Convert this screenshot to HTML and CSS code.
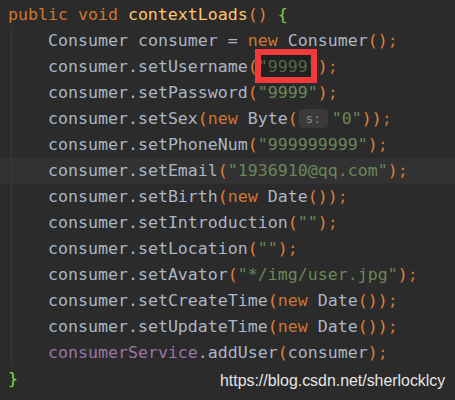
FILE: index.html
```html
<!DOCTYPE html>
<html>
<head>
<meta charset="utf-8">
<link rel="stylesheet" href="styles.css">
</head>
<body>
<div class="editor">
  <div class="guide"></div>
  <div class="code">
    <div class="line"><span class="kw">public void </span><span class="fn">contextLoads</span><span class="p">()</span> <span class="br">{</span></div>
    <div class="line in">Consumer consumer = <span class="kw">new </span>Consumer<span class="p">()</span><span class="kw">;</span></div>
    <div class="line in">consumer.setUsername<span class="p">(</span><span class="str">"9999"</span><span class="p">)</span><span class="kw">;</span></div>
    <div class="line in">consumer.setPassword<span class="p">(</span><span class="str">"9999"</span><span class="p">)</span><span class="kw">;</span></div>
    <div class="line in">consumer.setSex<span class="p">(</span><span class="kw">new </span>Byte<span class="p">(</span><span class="hint">s:</span><span class="str">"0"</span><span class="p">))</span><span class="kw">;</span></div>
    <div class="line in">consumer.setPhoneNum<span class="p">(</span><span class="str">"999999999"</span><span class="p">)</span><span class="kw">;</span></div>
    <div class="line in caret">consumer.setEmail<span class="p">(</span><span class="str">"1936910@qq.com"</span><span class="p">)</span><span class="kw">;</span></div>
    <div class="line in">consumer.setBirth<span class="p">(</span><span class="kw">new </span>Date<span class="p">())</span><span class="kw">;</span></div>
    <div class="line in">consumer.setIntroduction<span class="p">(</span><span class="str">""</span><span class="p">)</span><span class="kw">;</span></div>
    <div class="line in">consumer.setLocation<span class="p">(</span><span class="str">""</span><span class="p">)</span><span class="kw">;</span></div>
    <div class="line in">consumer.setAvator<span class="p">(</span><span class="str">"*/img/user.jpg"</span><span class="p">)</span><span class="kw">;</span></div>
    <div class="line in">consumer.setCreateTime<span class="p">(</span><span class="kw">new </span>Date<span class="p">())</span><span class="kw">;</span></div>
    <div class="line in">consumer.setUpdateTime<span class="p">(</span><span class="kw">new </span>Date<span class="p">())</span><span class="kw">;</span></div>
    <div class="line in"><span class="fld">consumerService</span>.addUser<span class="p">(</span>consumer<span class="p">)</span><span class="kw">;</span></div>
    <div class="line"><span class="br2">}</span></div>
  </div>
  <div class="mark"></div>
  <div class="watermark">https://blog.csdn.net/sherlocklcy</div>
</div>
</body>
</html>
```

FILE: styles.css
```css
html, body {
  margin: 0;
  padding: 0;
  background: #2b2b2b;
}
.editor {
  position: relative;
  width: 455px;
  height: 400px;
  background: #2b2b2b;
  overflow: hidden;
}
.code {
  padding-top: 2px;
  font-family: "DejaVu Sans Mono", "Liberation Mono", monospace;
  font-size: 16.6px;
  color: #a9b7c6;
}
.line {
  height: 26px;
  line-height: 26px;
  padding-left: 8px;
  white-space: pre;
}
.line.in {
  padding-left: 48px;
}
.caret {
  background: #323232;
}
.kw { color: #cc7832; }
.fn { color: #ffc66d; }
.p { color: #e0803c; }
.str { color: #6a8759; }
.fld { color: #9876aa; }
.br { color: #8fc14a; }
.br2 { color: #7ee03a; }
.hint {
  display: inline-block;
  width: 29px;
  height: 19px;
  line-height: 19px;
  margin: 0 4px 0 1px;
  border-radius: 4px;
  background: #3a3a3a;
  color: #868686;
  font-size: 13px;
  text-align: center;
  vertical-align: 1px;
}
.guide {
  position: absolute;
  left: 11px;
  top: 28px;
  width: 1px;
  height: 338px;
  background: #393939;
}
.mark {
  position: absolute;
  left: 255px;
  top: 49px;
  width: 50px;
  height: 22px;
  border: 6px solid #f23a3a;
  background: rgba(0, 0, 0, 0.22);
}
.watermark {
  position: absolute;
  left: 220px;
  top: 372px;
  font-family: "Liberation Sans", Arial, sans-serif;
  font-size: 15.9px;
  line-height: 18px;
  color: #e6e6e6;
}
```
